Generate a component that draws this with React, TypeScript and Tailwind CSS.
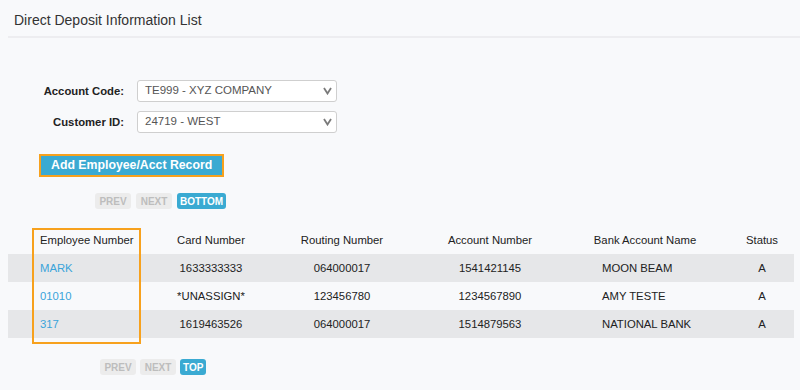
import React from "react"

const rows = [
  { emp: "MARK", card: "1633333333", routing: "064000017", account: "1541421145", name: "MOON BEAM", status: "A" },
  { emp: "01010", card: "*UNASSIGN*", routing: "123456780", account: "1234567890", name: "AMY TESTE", status: "A" },
  { emp: "317", card: "1619463526", routing: "064000017", account: "1514879563", name: "NATIONAL BANK", status: "A" },
]

function Select({ value }: { value: string }) {
  return (
    <div className="flex h-[22px] w-[200px] items-center justify-between rounded-[3px] border border-[#cfcfcf] bg-white pl-[7px] pr-[4px] text-[11.5px] text-[#555]">
      <span>{value}</span>
      <svg width="9" height="8" viewBox="0 0 9 8" className="text-[#7a7a7a]">
        <path d="M1 1 L4.5 6.5 L8 1" fill="none" stroke="currentColor" strokeWidth="1.8" />
      </svg>
    </div>
  )
}

function Pager({ last, gap }: { last: string; gap: string }) {
  return (
    <div className={`flex text-[10px] font-bold ${gap}`}>
      <span className="flex h-[16px] w-[36px] items-center justify-center rounded-[3px] bg-[#ececec] text-[#bdbdbd]">PREV</span>
      <span className="flex h-[16px] w-[36px] items-center justify-center rounded-[3px] bg-[#ececec] text-[#bdbdbd]">NEXT</span>
      <span className="flex h-[16px] items-center rounded-[3px] bg-[#3aaad2] px-[3px] text-white">{last}</span>
    </div>
  )
}

export default function App() {
  return (
    <div
      className="h-[390px] w-[800px] overflow-hidden bg-[#f8f9fb] text-[#222]"
      style={{ fontFamily: "'Liberation Sans', Arial, sans-serif" }}
    >
      <div className="pl-[14px] pt-[11px] text-[14px] leading-[18px] text-[#333]">Direct Deposit Information List</div>
      <div className="ml-[8px] mt-[7px] h-[2px] bg-[#ededf0]" />

      {/* filters */}
      <div className="mt-[42px] flex flex-col gap-[9px]">
        <div className="flex items-center">
          <span className="w-[124px] text-right text-[11.3px] font-bold">Account Code:</span>
          <div className="ml-[13px]">
            <Select value="TE999 - XYZ COMPANY" />
          </div>
        </div>
        <div className="flex items-center">
          <span className="w-[124px] text-right text-[11.3px] font-bold">Customer ID:</span>
          <div className="ml-[13px]">
            <Select value="24719 - WEST" />
          </div>
        </div>
      </div>

      <div className="ml-[39px] mt-[21px] inline-block border-[2px] border-[#f7a11d]">
        <div className="bg-[#3aaad2] px-[10px] text-[12.3px] font-bold leading-[19px] text-white">Add Employee/Acct Record</div>
      </div>

      <div className="ml-[95px] mt-[16px]">
        <Pager last="BOTTOM" gap="gap-[5px]" />
      </div>

      {/* table */}
      <div className="relative ml-[8px] mt-[20px] w-[786px] text-[11.3px]">
        <div className="flex h-[25px] items-end pb-[5px] text-[#222]">
          <div className="w-[150px] pl-[32px]">Employee Number</div>
          <div className="w-[106px] text-center">Card Number</div>
          <div className="w-[156px] text-center">Routing Number</div>
          <div className="w-[140px] text-center">Account Number</div>
          <div className="w-[170px] text-center">Bank Account Name</div>
          <div className="w-[64px] text-center">Status</div>
        </div>
        {rows.map((r, i) => (
          <div key={r.emp} className={`flex h-[28px] items-center ${i % 2 === 0 ? "bg-[#e6e7e9]" : ""}`}>
            <div className="w-[150px] pl-[32px] text-[#3aa4da]">{r.emp}</div>
            <div className="w-[106px] text-center">{r.card}</div>
            <div className="w-[156px] text-center">{r.routing}</div>
            <div className="w-[140px] text-center">{r.account}</div>
            <div className="w-[170px] pl-[42px]">{r.name}</div>
            <div className="w-[64px] text-center">{r.status}</div>
          </div>
        ))}
        <div className="absolute left-[24px] top-[-1px] h-[116px] w-[109px] border-[2px] border-[#f7a11d]" />
      </div>

      <div className="ml-[100px] mt-[21px]">
        <Pager last="TOP" gap="gap-[4px]" />
      </div>
    </div>
  )
}
